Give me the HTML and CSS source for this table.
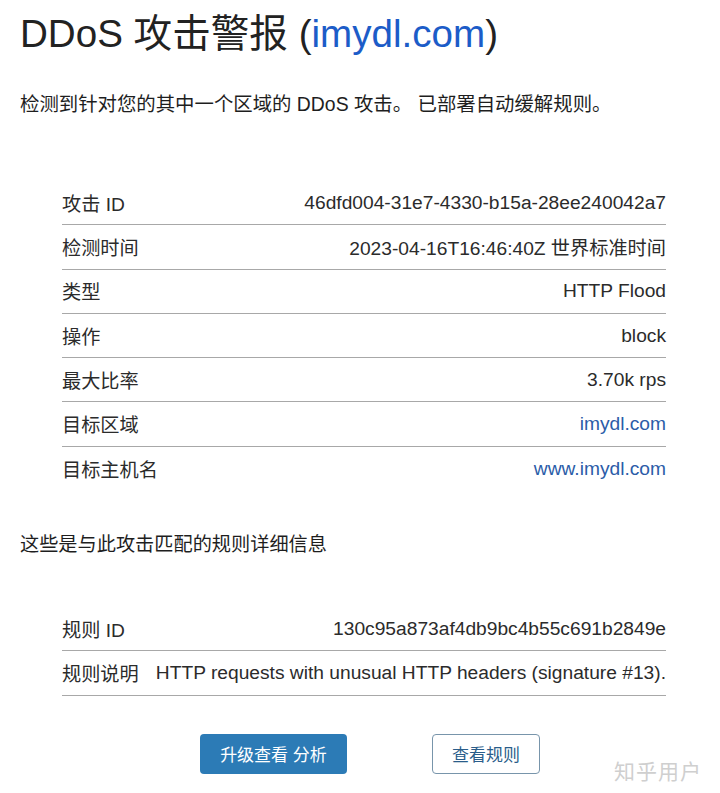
FILE: index.html
```html
<!DOCTYPE html>
<html lang="zh">
<head>
<meta charset="utf-8">
<link rel="stylesheet" href="styles.css">
</head>
<body>
<div class="page">
  <h1 class="title">DDoS 攻击警报 (<a class="link">imydl.com</a>)</h1>
  <p class="intro">检测到针对您的其中一个区域的 DDoS 攻击。 已部署自动缓解规则。</p>
  <div class="table table-attack">
    <div class="row"><span class="key">攻击 ID</span><span class="val">46dfd004-31e7-4330-b15a-28ee240042a7</span></div>
    <div class="row"><span class="key">检测时间</span><span class="val">2023-04-16T16:46:40Z 世界标准时间</span></div>
    <div class="row"><span class="key">类型</span><span class="val">HTTP Flood</span></div>
    <div class="row"><span class="key">操作</span><span class="val">block</span></div>
    <div class="row"><span class="key">最大比率</span><span class="val">3.70k rps</span></div>
    <div class="row"><span class="key">目标区域</span><span class="val link">imydl.com</span></div>
    <div class="row"><span class="key">目标主机名</span><span class="val link">www.imydl.com</span></div>
  </div>
  <p class="section">这些是与此攻击匹配的规则详细信息</p>
  <div class="table table-rule">
    <div class="row"><span class="key">规则 ID</span><span class="val">130c95a873af4db9bc4b55c691b2849e</span></div>
    <div class="row"><span class="key">规则说明</span><span class="val">HTTP requests with unusual HTTP headers (signature #13).</span></div>
  </div>
  <div class="actions">
    <a class="btn btn-primary">升级查看 分析</a>
    <a class="btn btn-outline">查看规则</a>
  </div>
  <div class="watermark">知乎用户</div>
</div>
</body>
</html>
```
FILE: styles.css
```css
html, body {
  margin: 0;
  padding: 0;
  background: #ffffff;
}
body {
  font-family: "Liberation Sans", Arial, "Noto Sans CJK SC", sans-serif;
  color: #2b2b2b;
}
.page {
  position: relative;
  width: 720px;
  height: 793px;
  overflow: hidden;
  padding: 0 0 0 20px;
  box-sizing: border-box;
}
.title {
  margin: 0;
  padding-top: 10px;
  font-size: 38.6px;
  line-height: 48px;
  font-weight: normal;
  color: #222;
}
.link {
  color: #1f5fbf;
  text-decoration: none;
}
.title .link {
  color: #1c5cc8;
}
.intro {
  margin: 0;
  padding-top: 34px;
  font-size: 19.4px;
  line-height: 24px;
  color: #1e1e1e;
}
.table {
  margin-left: 42px;
  width: 604px;
}
.table-attack {
  margin-top: 65px;
}
.row {
  display: flex;
  justify-content: space-between;
  align-items: center;
  height: 44.3px;
  font-size: 19.2px;
  color: #2b2b2b;
  border-bottom: 1px solid #a8a8a8;
  box-sizing: border-box;
}
.table-attack .row:last-child {
  border-bottom: none;
}
.key {
  white-space: nowrap;
}
.val {
  white-space: nowrap;
  text-align: right;
}
.val.link {
  color: #2b5ca8;
}
.section {
  margin: 0;
  padding-top: 42px;
  font-size: 19.2px;
  line-height: 24px;
  color: #1e1e1e;
}
.table-rule {
  margin-top: 50px;
}
.actions {
  display: flex;
  gap: 85px;
  margin-left: 180px;
  margin-top: 38px;
}
.btn {
  display: flex;
  align-items: center;
  justify-content: center;
  height: 40px;
  box-sizing: border-box;
  border-radius: 4px;
  font-size: 17px;
  text-decoration: none;
}
.btn-primary {
  width: 147px;
  background: #2c7bb6;
  color: #ffffff;
}
.btn-outline {
  width: 108px;
  background: #ffffff;
  color: #2a5d8a;
  border: 1px solid #7895ab;
}
.watermark {
  position: absolute;
  left: 614px;
  top: 755px;
  font-size: 21px;
  color: #cfcfcf;
  letter-spacing: 1px;
}
```
